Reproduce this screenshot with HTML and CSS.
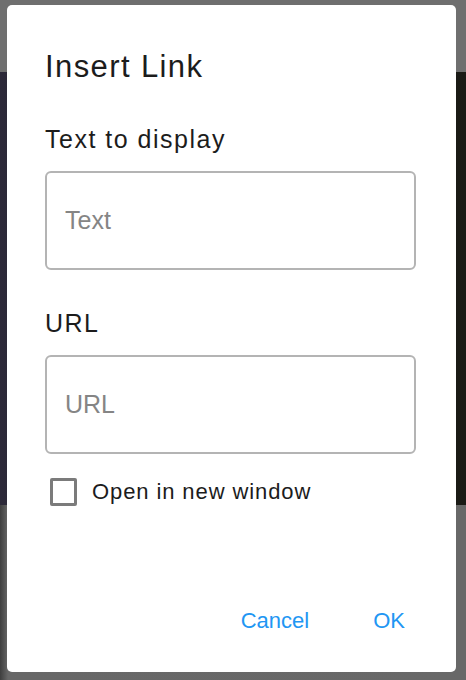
FILE: index.html
```html
<!DOCTYPE html>
<html lang="en">
<head>
<meta charset="utf-8">
<title>Insert Link</title>
<link rel="stylesheet" href="styles.css">
</head>
<body>
<div class="backdrop">
  <div class="photo"></div>
  <div class="lower"></div>
</div>
<div class="dialog" role="dialog" aria-labelledby="dlg-title">
  <div class="dialog-body">
    <h1 class="title" id="dlg-title">Insert Link</h1>
    <label class="field-label" for="link-text">Text to display</label>
    <input class="field" id="link-text" type="text" placeholder="Text">
    <label class="field-label field-label-second" for="link-url">URL</label>
    <input class="field" id="link-url" type="text" placeholder="URL">
    <label class="check-row">
      <span class="check-box"></span>
      <span class="check-text">Open in new window</span>
    </label>
  </div>
  <div class="dialog-footer">
    <button class="btn" type="button">Cancel</button>
    <button class="btn" type="button">OK</button>
  </div>
</div>
</body>
</html>
```
FILE: styles.css
```css
html, body {
  margin: 0;
  padding: 0;
  height: 100%;
}
body {
  background: #6f6f6f;
  font-family: "Liberation Sans", Arial, sans-serif;
  overflow: hidden;
}
.backdrop {
  display: flex;
  flex-direction: column;
  height: 680px;
}
.photo {
  margin-top: 72px;
  height: 433px;
  background: linear-gradient(90deg, #2c2939 0%, #24232a 40%, #1a1a15 100%);
}
.lower {
  flex: 1;
  background: linear-gradient(90deg, #3e3e3e 0px, #676767 8px, #686868 100%);
}
.dialog {
  position: absolute;
  left: 7px;
  top: 5px;
  width: 449px;
  height: 667px;
  background: #fff;
  border-radius: 5px;
  display: flex;
  flex-direction: column;
  box-sizing: border-box;
}
.dialog-body {
  display: flex;
  flex-direction: column;
  padding: 44px 40px 0 38px;
}
.title {
  margin: 0;
  font-size: 31px;
  line-height: 36px;
  font-weight: 400;
  color: #1c1c1c;
  letter-spacing: 1.4px;
}
.field-label {
  display: block;
  margin-top: 39px;
  font-size: 25px;
  line-height: 30px;
  color: #1c1c1c;
  letter-spacing: 1.5px;
}
.field-label-second {
  margin-top: 38px;
}
.field {
  margin-top: 17px;
  box-sizing: border-box;
  width: 371px;
  height: 99px;
  padding: 0 18px;
  border: 2px solid #b4b4b4;
  border-radius: 6px;
  font-family: "Liberation Sans", Arial, sans-serif;
  font-size: 25px;
  color: #222;
  background: #fff;
  outline: none;
}
.field::placeholder {
  color: #858585;
}
.check-row {
  display: flex;
  align-items: center;
  margin-top: 24px;
  padding-left: 5px;
  gap: 15px;
}
.check-box {
  box-sizing: border-box;
  width: 27px;
  height: 28px;
  border: 3px solid #7b7b7b;
  border-radius: 2px;
}
.check-text {
  font-size: 22px;
  line-height: 28px;
  color: #1c1c1c;
  letter-spacing: 0.9px;
}
.dialog-footer {
  margin-top: auto;
  display: flex;
  justify-content: flex-end;
  gap: 32px;
  padding: 0 35px 27px 0;
}
.btn {
  border: 0;
  background: transparent;
  padding: 0 16px;
  height: 48px;
  font-family: "Liberation Sans", Arial, sans-serif;
  font-size: 22px;
  color: #2196f3;
  cursor: pointer;
}
```
